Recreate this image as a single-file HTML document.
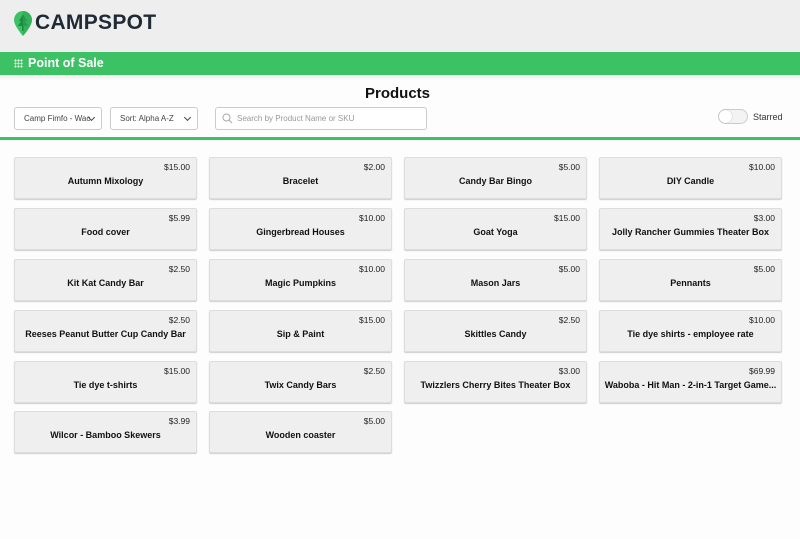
<!DOCTYPE html>
<html><head><style>
*{margin:0;padding:0;box-sizing:border-box}
body{width:800px;height:539px;overflow:hidden;background:#fdfdfe;font-family:"Liberation Sans",sans-serif;position:relative}
.hdr{position:absolute;left:0;top:0;width:800px;height:52px;background:#eeeeef}
.logo{position:absolute;left:13px;top:10px}
.brand{position:absolute;left:35px;top:11px;font-size:21px;font-weight:bold;color:#1f2a36;letter-spacing:0.3px}
.bar{position:absolute;left:0;top:52px;width:800px;height:23px;background:#3cc264;color:#fff;font-weight:bold;font-size:12.5px;line-height:23px;padding-left:28px}
.dots{position:absolute;left:14px;top:7px;width:9px;height:9px;background-image:radial-gradient(circle,#fff 0.9px,transparent 1.1px);background-size:3px 3px}
.shadow{position:absolute;left:0;top:75px;width:800px;height:6px;background:linear-gradient(#eee,#fdfdfe)}
h1{position:absolute;left:0;width:795px;top:85px;text-align:center;font-size:15px;font-weight:bold;color:#111}
.sel{position:absolute;top:107px;height:23px;border:1px solid #ccc;border-radius:3px;background:#fff;font-size:8px;color:#444;line-height:21px;padding-left:9px;overflow:hidden;white-space:nowrap}
.sel:after{content:"";position:absolute;right:7px;top:7px;width:4px;height:4px;border-right:1.3px solid #444;border-bottom:1.3px solid #444;transform:rotate(45deg)}
.search{position:absolute;left:215px;top:107px;width:212px;height:23px;border:1px solid #ccc;border-radius:3px;background:#fff;font-size:8px;color:#999;line-height:21px;padding-left:21px}
.search svg{position:absolute;left:6px;top:5px}
.tog{position:absolute;left:718px;top:109px;width:30px;height:15px;border:1px solid #ccc;border-radius:8px;background:#f3f3f3}
.tog:before{content:"";position:absolute;left:0;top:0;width:13px;height:13px;border-radius:50%;background:#fff;box-shadow:0 0 1px #999}
.star{position:absolute;left:753px;top:112px;font-size:9px;color:#333}
.line{position:absolute;left:0;top:137px;width:800px;height:3px;background:#3cc264}
.card{position:absolute;width:183px;height:42px;background:#efeff0;border:1px solid #ddd;border-radius:2px;box-shadow:0 1px 1px #ccc}
.card .p{position:absolute;right:6px;top:4px;font-size:8.5px;color:#222}
.card .n{position:absolute;left:0;right:0;top:18px;text-align:center;font-size:9px;font-weight:bold;color:#111;white-space:nowrap;overflow:hidden}
</style></head><body>
<div class="hdr">
<svg class="logo" width="20" height="28" viewBox="0 0 20 28"><path d="M10 1C5 1 1 5 1 10c0 6 9 16 9 16s9-10 9-16C19 5 15 1 10 1z" fill="#3cc264"/><path d="M10 4 6 11h2l-3 5h4v5h2v-5h4l-3-5h2z" fill="#1f8a42"/><path d="M10 1c5 0 9 4 9 9 0 6-9 16-9 16z" fill="#2fa653" opacity=".6"/></svg>
<div class="brand">CAMPSPOT</div>
</div>
<div class="bar"><div class="dots"></div>Point of Sale</div>
<div class="shadow"></div>
<h1>Products</h1>
<div class="sel" style="left:14px;width:88px">Camp Fimfo - Wac</div>
<div class="sel" style="left:110px;width:88px">Sort: Alpha A-Z</div>
<div class="search"><svg width="11" height="11" viewBox="0 0 11 11"><circle cx="4.5" cy="4.5" r="3.5" fill="none" stroke="#aaa"/><path d="M7 7l3 3" stroke="#aaa"/></svg>Search by Product Name or SKU</div>
<div class="tog"></div><div class="star">Starred</div>
<div class="line"></div>
<div class="card" style="left:14px;top:157px"><span class="p">$15.00</span><div class="n">Autumn Mixology</div></div>
<div class="card" style="left:209px;top:157px"><span class="p">$2.00</span><div class="n">Bracelet</div></div>
<div class="card" style="left:404px;top:157px"><span class="p">$5.00</span><div class="n">Candy Bar Bingo</div></div>
<div class="card" style="left:599px;top:157px"><span class="p">$10.00</span><div class="n">DIY Candle</div></div>
<div class="card" style="left:14px;top:208px"><span class="p">$5.99</span><div class="n">Food cover</div></div>
<div class="card" style="left:209px;top:208px"><span class="p">$10.00</span><div class="n">Gingerbread Houses</div></div>
<div class="card" style="left:404px;top:208px"><span class="p">$15.00</span><div class="n">Goat Yoga</div></div>
<div class="card" style="left:599px;top:208px"><span class="p">$3.00</span><div class="n">Jolly Rancher Gummies Theater Box</div></div>
<div class="card" style="left:14px;top:259px"><span class="p">$2.50</span><div class="n">Kit Kat Candy Bar</div></div>
<div class="card" style="left:209px;top:259px"><span class="p">$10.00</span><div class="n">Magic Pumpkins</div></div>
<div class="card" style="left:404px;top:259px"><span class="p">$5.00</span><div class="n">Mason Jars</div></div>
<div class="card" style="left:599px;top:259px"><span class="p">$5.00</span><div class="n">Pennants</div></div>
<div class="card" style="left:14px;top:310px"><span class="p">$2.50</span><div class="n">Reeses Peanut Butter Cup Candy Bar</div></div>
<div class="card" style="left:209px;top:310px"><span class="p">$15.00</span><div class="n">Sip &amp; Paint</div></div>
<div class="card" style="left:404px;top:310px"><span class="p">$2.50</span><div class="n">Skittles Candy</div></div>
<div class="card" style="left:599px;top:310px"><span class="p">$10.00</span><div class="n">Tie dye shirts - employee rate</div></div>
<div class="card" style="left:14px;top:361px"><span class="p">$15.00</span><div class="n">Tie dye t-shirts</div></div>
<div class="card" style="left:209px;top:361px"><span class="p">$2.50</span><div class="n">Twix Candy Bars</div></div>
<div class="card" style="left:404px;top:361px"><span class="p">$3.00</span><div class="n">Twizzlers Cherry Bites Theater Box</div></div>
<div class="card" style="left:599px;top:361px"><span class="p">$69.99</span><div class="n">Waboba - Hit Man - 2-in-1 Target Game...</div></div>
<div class="card" style="left:14px;top:411px"><span class="p">$3.99</span><div class="n">Wilcor - Bamboo Skewers</div></div>
<div class="card" style="left:209px;top:411px"><span class="p">$5.00</span><div class="n">Wooden coaster</div></div>
</body></html>
